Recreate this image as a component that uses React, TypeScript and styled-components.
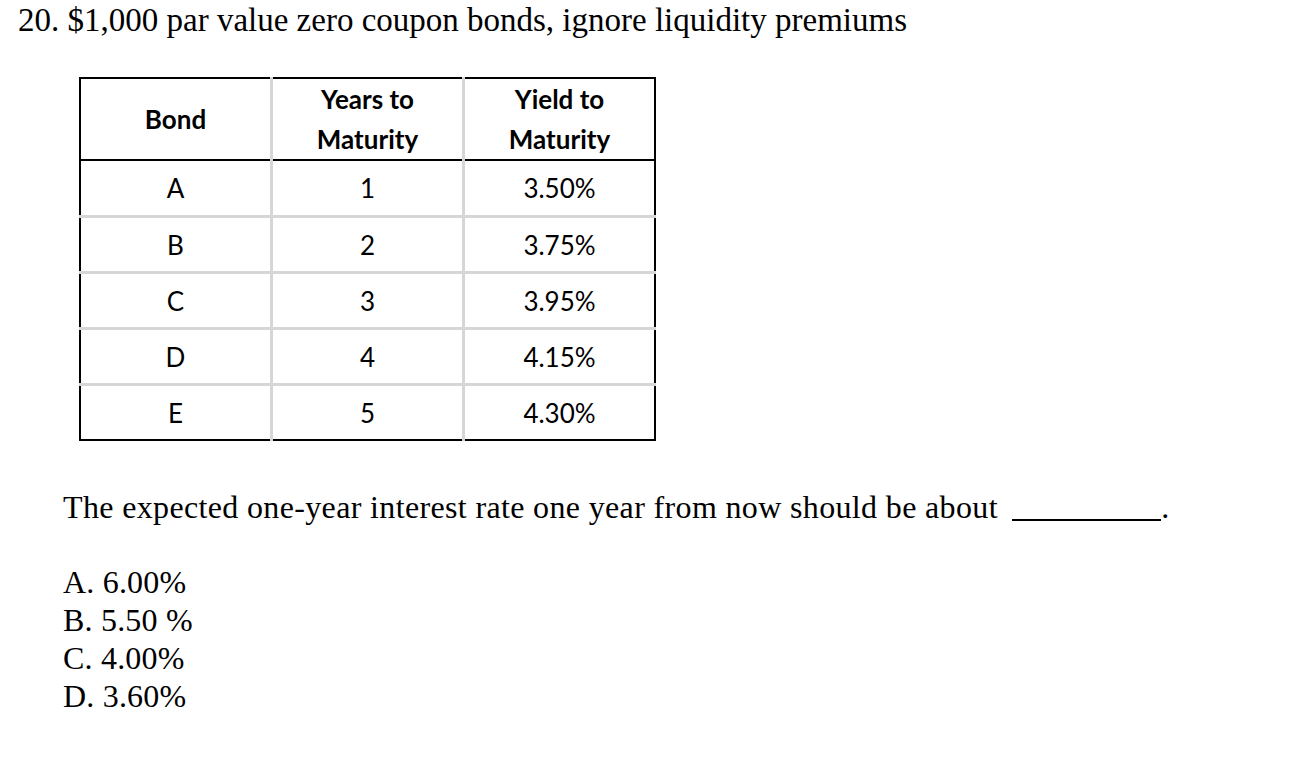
import styled, { createGlobalStyle } from 'styled-components';

const bonds = [
	{ bond: 'A', years: 1, ytm: '3.50%' },
	{ bond: 'B', years: 2, ytm: '3.75%' },
	{ bond: 'C', years: 3, ytm: '3.95%' },
	{ bond: 'D', years: 4, ytm: '4.15%' },
	{ bond: 'E', years: 5, ytm: '4.30%' },
];

const answers = ['A. 6.00%', 'B. 5.50 %', 'C. 4.00%', 'D. 3.60%'];

const GlobalStyle = createGlobalStyle`
	html, body {
		margin: 0;
		padding: 0;
		background: #ffffff;
	}
`;

const App = () => {
	return (
		<>
			<GlobalStyle />
			<Page>
				<Heading>20. $1,000 par value zero coupon bonds, ignore liquidity premiums</Heading>
				<BondTable>
					<thead>
						<tr>
							<HeadCell>Bond</HeadCell>
							<HeadCell>
								Years to
								<br />
								Maturity
							</HeadCell>
							<HeadCell>
								Yield to
								<br />
								Maturity
							</HeadCell>
						</tr>
					</thead>
					<tbody>
						{bonds.map((b) => (
							<tr key={b.bond}>
								<Cell>{b.bond}</Cell>
								<Cell>{b.years}</Cell>
								<Cell>{b.ytm}</Cell>
							</tr>
						))}
					</tbody>
				</BondTable>
				<Question>
					The expected one-year interest rate one year from now should be about <Blank />.
				</Question>
				<AnswerList>
					{answers.map((a) => (
						<Answer key={a}>{a}</Answer>
					))}
				</AnswerList>
			</Page>
		</>
	);
};

export default App;

const Page = styled.div`
	width: 1316px;
	height: 770px;
	box-sizing: border-box;
	padding: 2px 0 0 18px;
	font-family: 'Liberation Serif', 'Times New Roman', serif;
	color: #000;
`;

const Heading = styled.div`
	font-size: 33px;
	line-height: 36px;
`;

const BondTable = styled.table`
	margin: 39px 0 0 61px;
	border-collapse: collapse;
	border: 2px solid #000;
	font-family: Lato, 'Open Sans', sans-serif;
	font-size: 26px;
	color: #000;
`;

const HeadCell = styled.th`
	width: 189px;
	height: 78px;
	padding: 0;
	font-weight: 700;
	line-height: 40px;
	text-align: center;
	border-bottom: 2px solid #000;
	border-left: 3px solid #d6d6d6;

	&:first-child {
		border-left: none;
	}
`;

const Cell = styled.td`
	height: 53px;
	padding: 0;
	line-height: 30px;
	text-align: center;
	border-top: 3px solid #d6d6d6;
	border-left: 3px solid #d6d6d6;

	&:first-child {
		border-left: none;
	}

	tr:first-child > & {
		border-top: none;
		height: 54px;
	}
`;

const Question = styled.div`
	margin: 48px 0 0 45px;
	font-size: 32px;
	line-height: 36px;
	letter-spacing: 0.35px;
`;

const Blank = styled.span`
	display: inline-block;
	width: 149px;
	margin-left: 6px;
	border-bottom: 2px solid #000;
	vertical-align: baseline;
	transform: translateY(3px);
`;

const AnswerList = styled.div`
	margin: 38px 0 0 45px;
	display: flex;
	flex-direction: column;
`;

const Answer = styled.div`
	font-size: 32px;
	line-height: 38px;
	letter-spacing: 0.2px;
`;
